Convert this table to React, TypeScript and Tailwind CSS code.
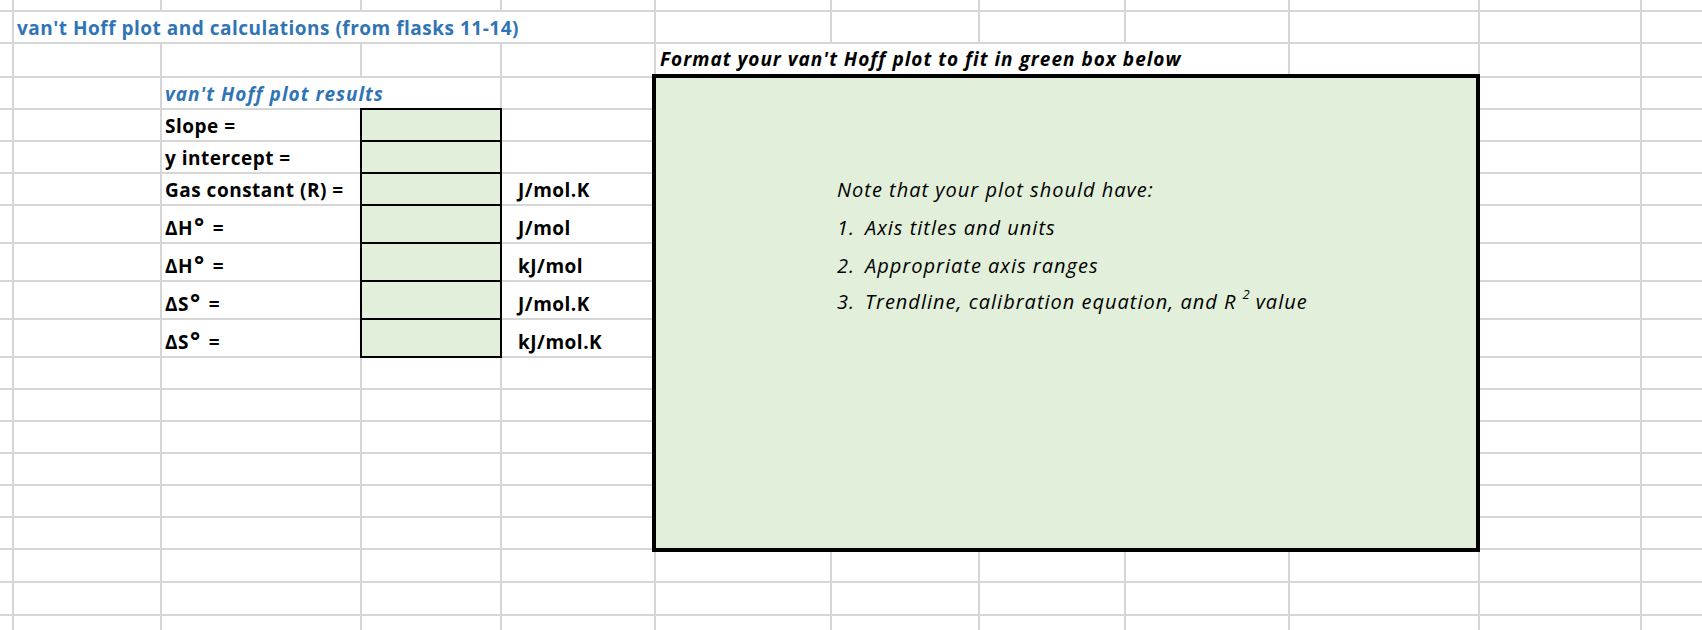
import React from 'react';

// spreadsheet sizes taken from the screenshot (tracks between 2px grid lines)
const COLS = 12;
const ROWS = 20;

type Item = {
  key: string;
  col: string;
  row: string;
  cells: number; // how many grid cells this item occupies (0 = overlay)
  className: string;
  content?: React.ReactNode;
};

const Deg = () => <span className="ml-[1px] mr-[8px] text-[1.25em] leading-none">°</span>;

const labels: React.ReactNode[] = [
  'Slope =',
  'y intercept =',
  'Gas constant (R) =',
  <>ΔH<Deg />=</>,
  <>ΔH<Deg />=</>,
  <>ΔS<Deg />=</>,
  <>ΔS<Deg />=</>,
];

const rowStarts = ['row-start-5', 'row-start-6', 'row-start-7', 'row-start-8', 'row-start-9', 'row-start-10', 'row-start-11'];

const units: { row: string; text: string }[] = [
  { row: 'row-start-7', text: 'J/mol.K' },
  { row: 'row-start-8', text: 'J/mol' },
  { row: 'row-start-9', text: 'kJ/mol' },
  { row: 'row-start-10', text: 'J/mol.K' },
  { row: 'row-start-11', text: 'kJ/mol.K' },
];

const cellText = 'flex items-end leading-[22px] whitespace-nowrap';
const boldText = 'text-[19px] font-bold tracking-[0.5px]';
const headText = 'text-[19px] font-bold italic tracking-[1px]';
const noteText = `${cellText} pb-[3px] relative z-20 pl-[5px] text-[20px] italic tracking-[1px] text-black`;

const App: React.FC = () => {
  const items: Item[] = [
    {
      key: 'title',
      col: 'col-start-2 col-span-4',
      row: 'row-start-2',
      cells: 4,
      className: `${cellText} ${boldText} pb-[3px] bg-white pl-[3px] text-[#2f75b5]`,
      content: "van't Hoff plot and calculations (from flasks 11-14)",
    },
    {
      key: 'format',
      col: 'col-start-6 col-span-4',
      row: 'row-start-3',
      cells: 4,
      className: `${cellText} ${headText} pb-[6px] bg-white pl-[4px] text-black`,
      content: "Format your van't Hoff plot to fit in green box below",
    },
    {
      key: 'results',
      col: 'col-start-3 col-span-2',
      row: 'row-start-4',
      cells: 2,
      className: `${cellText} ${headText} pb-[3px] bg-white pl-[3px] text-[#2f75b5]`,
      content: "van't Hoff plot results",
    },
    ...labels.map((l, i) => ({
      key: `label-${i}`,
      col: 'col-start-3',
      row: rowStarts[i],
      cells: 1,
      className: `${cellText} ${boldText} pb-[3px] bg-white pl-[3px] text-black`,
      content: l,
    })),
    ...rowStarts.map((r, i) => ({
      key: `input-${i}`,
      col: 'col-start-4',
      row: r,
      cells: 1,
      className: 'relative z-10 -m-[2px] border-2 border-black bg-[#e2efda]',
    })),
    ...units.map((u, i) => ({
      key: `unit-${i}`,
      col: 'col-start-5',
      row: u.row,
      cells: 1,
      className: `${cellText} ${boldText} pb-[3px] bg-white pl-[16px] text-black`,
      content: u.text,
    })),
    {
      key: 'plotbox',
      col: 'col-start-6 col-span-5',
      row: 'row-start-4 row-span-14',
      cells: 70,
      className: 'relative z-10 -mt-[4px] -ml-[4px] -mr-[2px] -mb-[4px] border-4 border-black bg-[#e2efda]',
    },
    {
      key: 'note-0',
      col: 'col-start-7 col-span-4',
      row: 'row-start-7',
      cells: 0,
      className: noteText,
      content: 'Note that your plot should have:',
    },
    {
      key: 'note-1',
      col: 'col-start-7 col-span-4',
      row: 'row-start-8',
      cells: 0,
      className: noteText,
      content: <><span className="w-[28px] inline-block">1.</span>Axis titles and units</>,
    },
    {
      key: 'note-2',
      col: 'col-start-7 col-span-4',
      row: 'row-start-9',
      cells: 0,
      className: noteText,
      content: <><span className="w-[28px] inline-block">2.</span>Appropriate axis ranges</>,
    },
    {
      key: 'note-3',
      col: 'col-start-7 col-span-4',
      row: 'row-start-10',
      cells: 0,
      className: noteText,
      content: (
        <>
          <span className="w-[28px] inline-block">3.</span>Trendline, calibration equation, and R
          <span className="relative -top-[10px] text-[13px] ml-[6px] mr-[5px]">2</span>value
        </>
      ),
    },
  ];

  const used = items.reduce((n, it) => n + it.cells, 0);
  const fillers = Array.from({ length: COLS * ROWS - used });

  return (
    <div className="w-[1702px] h-[630px] overflow-hidden bg-white font-['Open_Sans',sans-serif]">
      <div className="grid h-[630px] w-[1702px] gap-[2px] bg-[#d6d6d6] grid-cols-[12px_146px_198px_138px_152px_174px_146px_144px_162px_188px_160px_60px] grid-rows-[10px_30px_32px_30px_30px_30px_30px_36px_36px_36px_36px_30px_30px_30px_30px_30px_30px_31px_31px_14px]">
        {items.map((it) => (
          <div key={it.key} className={`${it.col} ${it.row} ${it.className}`}>
            <span>{it.content}</span>
          </div>
        ))}
        {fillers.map((_, i) => (
          <div key={`f-${i}`} className="bg-white" />
        ))}
      </div>
    </div>
  );
};

export default App;
